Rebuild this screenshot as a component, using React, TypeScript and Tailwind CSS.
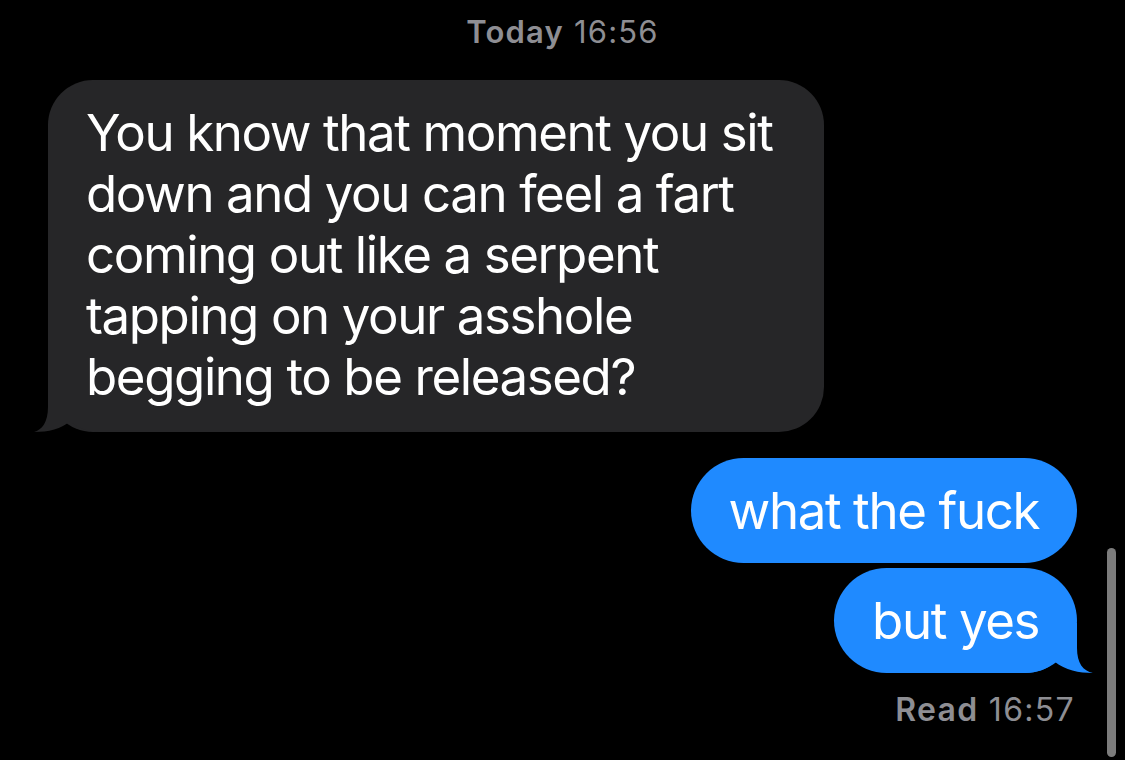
const font = { fontFamily: 'Inter, "Noto Sans", Arial, sans-serif' };

const GrayTail = () => (
  <svg className="absolute left-[-14px] bottom-0" width="80" height="50" viewBox="0 0 80 50">
    <path d="M14 0 L14 25 C14 40 8 48 0 50 C14 50 28 47 36 39 C44 46 54 50 66 50 L80 50 L80 0 Z" fill="#262628" />
  </svg>
);

const BlueTail = () => (
  <svg className="absolute right-[-16px] bottom-0" width="80" height="50" viewBox="0 0 80 50">
    <path d="M64 0 L64 25 C64 40 70 48 80 50 C66 50 52 47 42 39 C34 46 24 50 12 50 L0 50 L0 0 Z" fill="#1f8aff" />
  </svg>
);

export default function App() {
  return (
    <div className="relative h-[760px] w-[1125px] overflow-hidden bg-black text-white" style={font}>
      <div className="pt-[12px] text-center text-[31px] leading-[40px] tracking-[1.2px] text-[#8e8e93]">
        <span className="font-semibold">Today</span> 16:56
      </div>

      <div className="mt-[28px] flex">
        <div className="relative ml-[48px] w-[776px] rounded-[45px] bg-[#262628] pl-[38px] pr-[20px] pt-[22px] pb-[25px] text-[51px] leading-[61px] tracking-[-1.4px] whitespace-nowrap">
          <p className="relative z-10">
            You know that moment you sit
            <br />
            down and you can feel a fart
            <br />
            coming out like a serpent
            <br />
            tapping on your asshole
            <br />
            begging to be released?
          </p>
          <GrayTail />
        </div>
      </div>

      <div className="mt-[26px] flex flex-col items-end gap-[5px] pr-[48px] text-[51px] leading-[61px] tracking-[-1.4px] whitespace-nowrap">
        <div className="rounded-full bg-[#1f8aff] px-[38px] py-[22px]">what the fuck</div>
        <div className="relative rounded-full bg-[#1f8aff] px-[38px] py-[22px]">
          <span className="relative z-10">but yes</span>
          <BlueTail />
        </div>
      </div>

      <div className="mt-[17px] pr-[50px] text-right text-[32px] leading-[40px] tracking-[1.3px] text-[#8e8e93]">
        <span className="font-semibold">Read</span> 16:57
      </div>

      <div className="absolute left-[1107px] top-[548px] h-[209px] w-[9px] rounded-full bg-[#7c7c7c]" />
    </div>
  );
}
